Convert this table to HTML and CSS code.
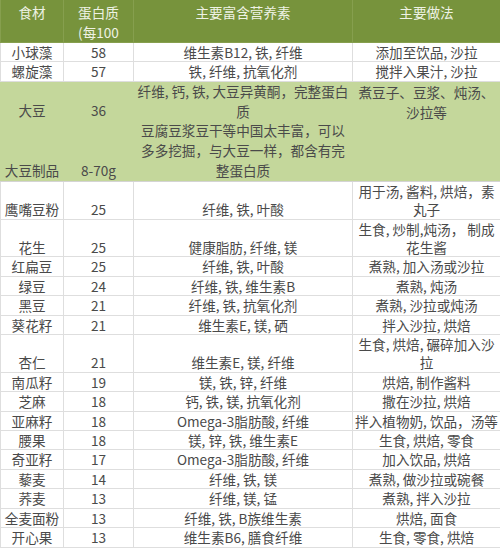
FILE: index.html
```html
<!DOCTYPE html>
<html lang="zh">
<head>
<meta charset="utf-8">
<link rel="stylesheet" href="styles.css">
</head>
<body>
<table class="food">
<colgroup>
<col class="c1"><col class="c2"><col class="c3"><col class="c4">
</colgroup>
<thead>
<tr class="head">
<th>食材</th><th>蛋白质<br>(每100</th><th>主要富含营养素</th><th>主要做法</th>
</tr>
</thead>
<tbody>
<tr><td>小球藻</td><td>58</td><td>维生素B12, 铁, 纤维</td><td>添加至饮品, 沙拉</td></tr>
<tr><td>螺旋藻</td><td>57</td><td>铁, 纤维, 抗氧化剂</td><td>搅拌入果汁, 沙拉</td></tr>
<tr class="soy soy1">
<td>大豆</td><td>36</td>
<td rowspan="2" class="soyinfo">纤维, 钙, 铁, 大豆异黄酮，完整蛋白<br>质<br>豆腐豆浆豆干等中国太丰富，可以<br>多多挖掘，与大豆一样，都含有完<br>整蛋白质</td>
<td rowspan="2" class="soyway">煮豆子、豆浆、炖汤、<br>沙拉等</td>
</tr>
<tr class="soy soy2"><td>大豆制品</td><td>8-70g</td></tr>
<tr><td>鹰嘴豆粉</td><td>25</td><td>纤维, 铁, 叶酸</td><td>用于汤, 酱料, 烘焙，素<br>丸子</td></tr>
<tr><td>花生</td><td>25</td><td>健康脂肪, 纤维, 镁</td><td>生食, 炒制,炖汤，&nbsp;制成<br>花生酱</td></tr>
<tr><td>红扁豆</td><td>25</td><td>纤维, 铁, 叶酸</td><td>煮熟, 加入汤或沙拉</td></tr>
<tr><td>绿豆</td><td>24</td><td>纤维, 铁, 维生素B</td><td>煮熟, 炖汤</td></tr>
<tr><td>黑豆</td><td>21</td><td>纤维, 铁, 抗氧化剂</td><td>煮熟, 沙拉或炖汤</td></tr>
<tr><td>葵花籽</td><td>21</td><td>维生素E, 镁, 硒</td><td>拌入沙拉, 烘焙</td></tr>
<tr><td>杏仁</td><td>21</td><td>维生素E, 镁, 纤维</td><td>生食, 烘焙, 碾碎加入沙<br>拉</td></tr>
<tr><td>南瓜籽</td><td>19</td><td>镁, 铁, 锌, 纤维</td><td>烘焙, 制作酱料</td></tr>
<tr><td>芝麻</td><td>18</td><td>钙, 铁, 镁, 抗氧化剂</td><td>撒在沙拉, 烘焙</td></tr>
<tr><td>亚麻籽</td><td>18</td><td>Omega-3脂肪酸, 纤维</td><td>拌入植物奶, 饮品，汤等</td></tr>
<tr><td>腰果</td><td>18</td><td>镁, 锌, 铁, 维生素E</td><td>生食, 烘焙, 零食</td></tr>
<tr><td>奇亚籽</td><td>17</td><td>Omega-3脂肪酸, 纤维</td><td>加入饮品, 烘焙</td></tr>
<tr><td>藜麦</td><td>14</td><td>纤维, 铁, 镁</td><td>煮熟, 做沙拉或碗餐</td></tr>
<tr><td>荞麦</td><td>13</td><td>纤维, 镁, 锰</td><td>煮熟, 拌入沙拉</td></tr>
<tr><td>全麦面粉</td><td>13</td><td>纤维, 铁, B族维生素</td><td>烘焙, 面食</td></tr>
<tr><td>开心果</td><td>13</td><td>维生素B6, 膳食纤维</td><td>生食, 零食, 烘焙</td></tr>
</tbody>
</table>
</body>
</html>
```

FILE: styles.css
```css
html, body {
  margin: 0;
  padding: 0;
  background: #ffffff;
}

.food {
  width: 500px;
  table-layout: fixed;
  border-collapse: collapse;
  font-family: "Noto Sans CJK SC", "Noto Sans", sans-serif;
  font-size: 13.6px;
  color: #4a4a4a;
}

.c1 { width: 63px; }
.c2 { width: 70px; }
.c3 { width: 219px; }
.c4 { width: 148px; }

.food th,
.food td {
  padding: 0;
  text-align: center;
  white-space: nowrap;
  line-height: 18.4px;
  border: 1px solid #dedede;
  vertical-align: bottom;
  overflow: visible;
}

.head th {
  height: 41px;
  background: #77933c;
  color: #eef2e4;
  font-weight: normal;
  vertical-align: top;
  padding-top: 3px;
  line-height: 19.5px;
  border-color: #869f4e;
  border-top: none;
  box-sizing: border-box;
}

.soy td {
  background: #c4d79b;
  border-color: #c4d79b;
  line-height: 19.8px;
}

.soy1 td {
  height: 39px;
  border-top-color: #d4d4d4;
}

.soy2 td {
  height: 58px;
  border-bottom-color: #d4d4d4;
}

.soy td.soyinfo {
  vertical-align: middle;
  border-top-color: #d4d4d4;
  border-bottom-color: #d4d4d4;
}

.soy td.soyway {
  vertical-align: top;
  padding-top: 1px;
  border-top-color: #d4d4d4;
  border-bottom-color: #d4d4d4;
}
```
